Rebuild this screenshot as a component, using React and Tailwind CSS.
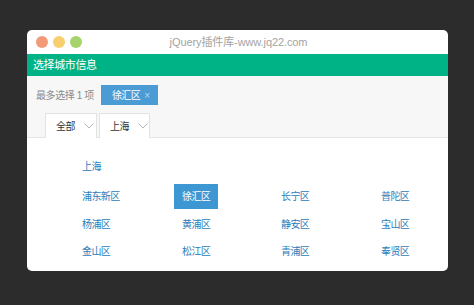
const districts = [
  '浦东新区', '徐汇区', '长宁区', '普陀区',
  '杨浦区', '黄浦区', '静安区', '宝山区',
  '金山区', '松江区', '青浦区', '奉贤区',
]

const Chevron = () => (
  <svg width="10" height="6" viewBox="0 0 10 6" className="ml-[9px] shrink-0">
    <path d="M0.5 0.5 L5 5 L9.5 0.5" fill="none" stroke="#b5b5b5" strokeWidth="1" />
  </svg>
)

const App = () => {
  return (
    <div
      className="w-[474px] h-[305px] bg-[#2c2c2c] pt-[30px] pl-[27px]"
      style={{ fontFamily: '"Liberation Sans", "Noto Sans CJK SC", sans-serif' }}
    >
      <div className="w-[421px] h-[241px] bg-white rounded-[5px] overflow-hidden flex flex-col">
        {/* Title bar */}
        <div className="relative h-[24px] flex items-center pl-[9px] gap-[5px]">
          <span className="w-[12px] h-[12px] rounded-full bg-[#f39b78]" />
          <span className="w-[12px] h-[12px] rounded-full bg-[#f7cf6e]" />
          <span className="w-[12px] h-[12px] rounded-full bg-[#a4d46b]" />
          <span className="absolute inset-0 flex items-center justify-center text-[11px] text-[#a3a3a3] pl-[2px] tracking-[-0.1px]">
            jQuery插件库-www.jq22.com
          </span>
        </div>

        {/* Header */}
        <div className="h-[22px] bg-[#00b386] flex items-center pl-[6px] text-[11px] tracking-[-0.4px] text-white">
          选择城市信息
        </div>

        {/* Selection area */}
        <div className="h-[62px] bg-[#f7f7f7] border-b border-[#e6e6e6] flex flex-col">
          <div className="flex items-center h-[20px] mt-[9px] pl-[9px]">
            <span className="text-[10px] tracking-[-0.4px] text-[#8a8a8a] whitespace-nowrap">最多选择 1 项</span>
            <span className="ml-[7px] h-[20px] w-[57px] bg-[#4b9bd5] text-white text-[10px] tracking-[-0.6px] flex items-center pl-[11px] whitespace-nowrap">
              徐汇区
              <span className="ml-[4px] text-[#b6d6ee] text-[10px]">×</span>
            </span>
          </div>
          <div className="flex mt-auto pl-[18px] gap-[2px] -mb-px">
            <div className="h-[25px] w-[52px] bg-white border border-b-0 border-[#e2e2e2] flex items-center pl-[10px] text-[10px] tracking-[-0.6px] text-[#333] whitespace-nowrap">
              全部
              <Chevron />
            </div>
            <div className="h-[25px] w-[51px] bg-white border border-b-0 border-[#e2e2e2] flex items-center pl-[10px] text-[10px] tracking-[-0.6px] text-[#333] whitespace-nowrap">
              上海
              <Chevron />
            </div>
          </div>
        </div>

        {/* Districts */}
        <div className="pl-[47px] pt-[20px]">
          <div className="h-[16px] flex items-center pl-[8px] text-[10px] tracking-[-0.6px] text-[#2b7cb9]">上海</div>
          <div className="grid grid-cols-[100px_99px_100px_auto] gap-y-[2.5px] mt-[10px]">
            {districts.map(name => (
              <div key={name} className="h-[25px] flex">
                <span
                  className={
                    name === '徐汇区'
                      ? 'h-[25px] px-[8px] flex items-center bg-[#3d97d3] text-white text-[10px] tracking-[-0.6px] whitespace-nowrap'
                      : 'h-[25px] px-[8px] flex items-center text-[#2b7cb9] text-[10px] tracking-[-0.6px] whitespace-nowrap'
                  }
                >
                  {name}
                </span>
              </div>
            ))}
          </div>
        </div>
      </div>
    </div>
  )
}

export default App
